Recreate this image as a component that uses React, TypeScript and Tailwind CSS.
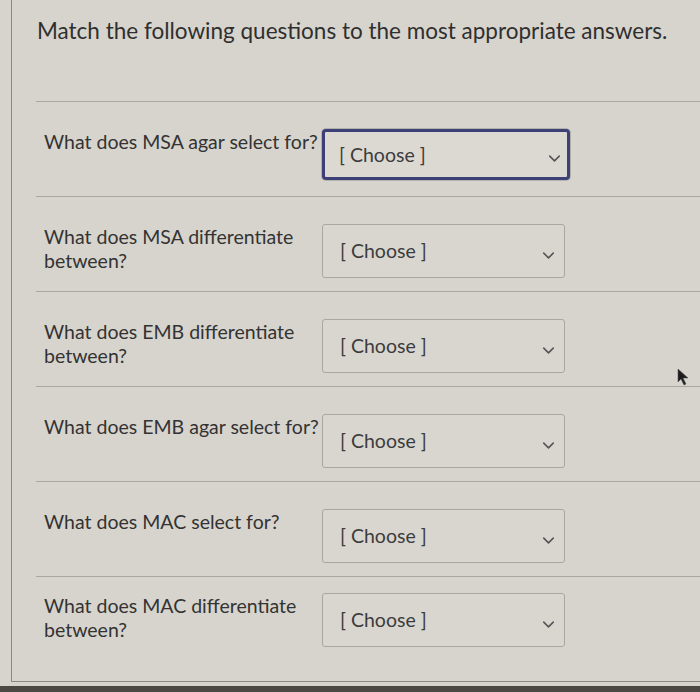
import { ChevronDown } from "lucide-react";

// ---------------------------------------------------------------------------
// Data
// ---------------------------------------------------------------------------

const questions = [
  { text: "What does MSA agar select for?", focused: true },
  { text: "What does MSA differentiate between?", focused: false },
  { text: "What does EMB differentiate between?", focused: false },
  { text: "What does EMB agar select for?", focused: false },
  { text: "What does MAC select for?", focused: false },
  { text: "What does MAC differentiate between?", focused: false },
];

// ---------------------------------------------------------------------------
// Select box
// ---------------------------------------------------------------------------

function ChooseSelect({ focused }: { focused: boolean }) {
  return (
    <div
      className={
        focused
          ? "flex h-[51px] w-[248px] shrink-0 items-center justify-between rounded-[4px] border-[3px] border-[#3d4076] bg-[#dcd9d3] pl-[14px] pr-[3px] shadow-[0_0_0_1px_#b3b1ac]"
          : "flex h-[54px] w-[243px] shrink-0 items-center justify-between rounded-[3px] border border-[#a9a7a2] bg-[#d9d6d0] pl-[17px] pr-[6px]"
      }
    >
      <span className="text-[19.5px] leading-none text-[#3c3c3c]">[ Choose ]</span>
      <ChevronDown className="mt-[8px] h-[19px] w-[19px] text-[#555]" strokeWidth={2} />
    </div>
  );
}

// ---------------------------------------------------------------------------
// Row
// ---------------------------------------------------------------------------

function QuestionRow({ text, focused, last }: { text: string; focused: boolean; last: boolean }) {
  return (
    <div
      className={
        last
          ? "flex h-[105px] items-start pt-[16px]"
          : "flex h-[95px] items-start border-b border-[#aaa7a1] pt-[27px]"
      }
    >
      <p className="mt-[1px] w-[286px] shrink-0 pl-[8px] pr-0 text-[19.5px] leading-[24px] text-[#333]">
        {text}
      </p>
      <ChooseSelect focused={focused} />
    </div>
  );
}

// ---------------------------------------------------------------------------
// Page
// ---------------------------------------------------------------------------

export default function App() {
  return (
    <div className="relative h-[692px] w-[700px] overflow-hidden bg-[#4d4842] font-['Lato','Liberation_Sans',sans-serif]">
      <div className="h-[686px] bg-[#d7d4cd]">
        <div className="ml-[11px] h-[682px] border-b border-l border-[#8c8984]">
          <h1 className="pl-[25px] pt-[16px] text-[22.5px] leading-[30px] text-[#2f2f2f]">
            Match the following questions to the most appropriate answers.
          </h1>
          <div className="ml-[24px] mt-[55px] border-t border-[#aaa7a1]">
            {questions.map((q, i) => (
              <QuestionRow key={q.text} text={q.text} focused={q.focused} last={i === questions.length - 1} />
            ))}
          </div>
        </div>
      </div>

      {/* mouse pointer */}
      <svg className="absolute left-[677px] top-[368px]" width="12" height="18" viewBox="0 0 12 18">
        <path d="M1 1 L1 14 L4 11 L7 17 L9 16 L6 10 L11 10 Z" fill="#1c1c1c" stroke="#555" strokeWidth="0.6" />
      </svg>
    </div>
  );
}
